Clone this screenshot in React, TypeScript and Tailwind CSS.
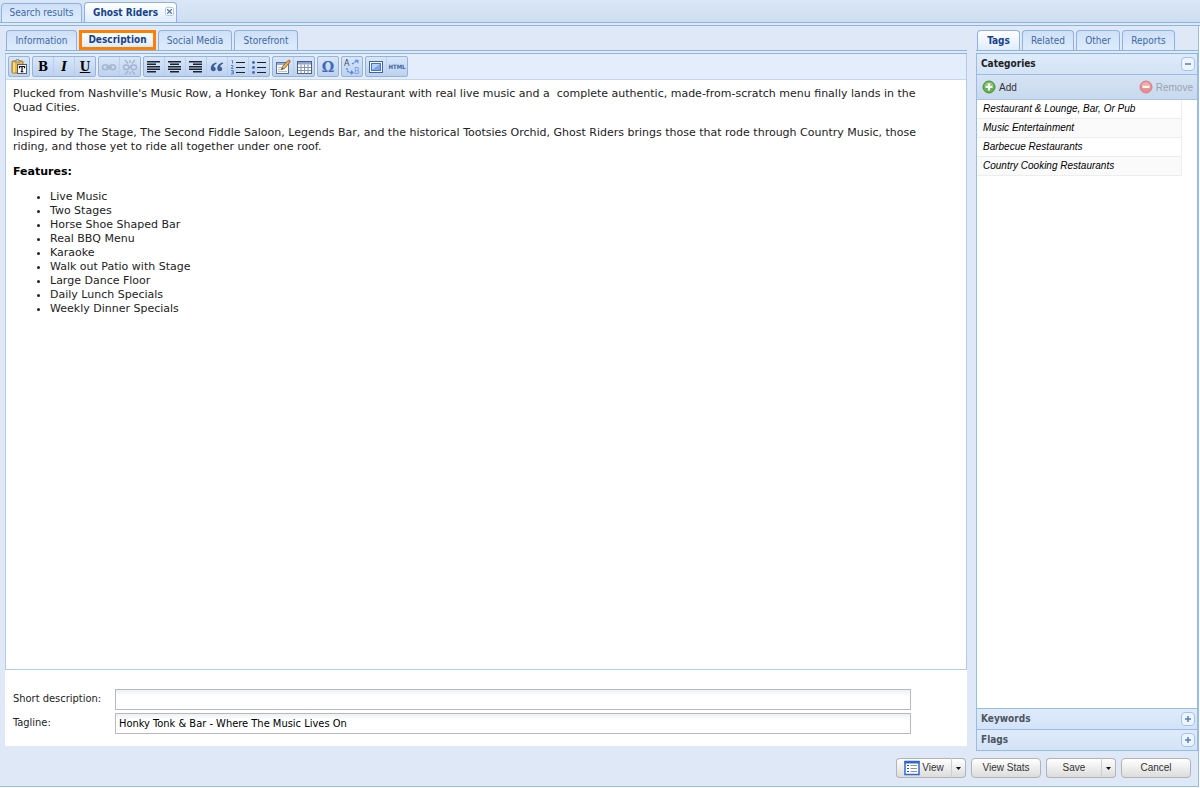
import React from "react"
import clsx from "clsx"

type TabItem = {
  label: string
  width: string
  active?: boolean
  marked?: boolean
}

const editorTabs: TabItem[] = [
  { label: "Information", width: "w-[71px]" },
  { label: "Description", width: "w-[77px]", active: true, marked: true },
  { label: "Social Media", width: "w-[74px]" },
  { label: "Storefront", width: "w-[64px]" },
]

const sideTabs: TabItem[] = [
  { label: "Tags", width: "w-[43px]", active: true },
  { label: "Related", width: "w-[52px]" },
  { label: "Other", width: "w-[44px]" },
  { label: "Reports", width: "w-[53px]" },
]

const features = [
  "Live Music",
  "Two Stages",
  "Horse Shoe Shaped Bar",
  "Real BBQ Menu",
  "Karaoke",
  "Walk out Patio with Stage",
  "Large Dance Floor",
  "Daily Lunch Specials",
  "Weekly Dinner Specials",
]

const categories = [
  "Restaurant & Lounge, Bar, Or Pub",
  "Music Entertainment",
  "Barbecue Restaurants",
  "Country Cooking Restaurants",
]

const Icon: React.FC<{ children: React.ReactNode }> = ({ children }) => (
  <svg width="16" height="16" viewBox="0 0 16 16" fill="none" aria-hidden="true">
    {children}
  </svg>
)

const PasteIcon = () => (
  <Icon>
    <rect x="1" y="2" width="11" height="12" rx="1" fill="#e9b63f" stroke="#a87722" />
    <path d="M2 3.500h2v10H2z" fill="#f8dc8a" />
    <path d="M4 3V1.500h1.500V.5h2v1H9V3z" fill="#d8d8d8" stroke="#777" strokeWidth=".7" />
    <rect x="6.500" y="5.500" width="9" height="9" fill="#f4f6fa" stroke="#555c6c" />
    <path d="M8.500 9.200V7.500h5v1.700M11 7.500v5M9.800 12.700h2.400" stroke="#111" strokeWidth="1.200" />
  </Icon>
)

const LinkIcon = () => (
  <Icon>
    <g stroke="#a5b4cc" strokeWidth="1.500">
      <rect x="1.500" y="6" width="6" height="4.500" rx="2.200" />
      <rect x="8.500" y="6" width="6" height="4.500" rx="2.200" />
      <path d="M5 8.200h6" />
    </g>
  </Icon>
)

const UnlinkIcon = () => (
  <Icon>
    <g stroke="#a5b4cc" strokeWidth="1.300">
      <rect x="1.500" y="6" width="5.500" height="4.500" rx="2.200" />
      <rect x="9" y="6" width="5.500" height="4.500" rx="2.200" />
      <path d="M3 1l3 3.500M8 1v3M13 1l-3 3.500M3 15.500L6 12M8 15.500v-3M13 15.500L10 12M6 10l4-4" />
    </g>
  </Icon>
)

const AlignIcon: React.FC<{ align: "left" | "center" | "right" }> = ({ align }) => {
  const widths = [13, 9, 13, 13, 9]
  return (
    <Icon>
      {widths.map((w, i) => {
        const x = align === "left" ? 1 : align === "right" ? 14 - w : 1 + (13 - w) / 2
        return <rect key={i} x={x} y={2 + i * 2.5} width={w} height="1.500" fill="#1b2230" />
      })}
    </Icon>
  )
}

const QuoteIcon = () => (
  <Icon>
    <g fill="#3d5f98">
      <path d="M7.500 3.500C4 4 1.800 6.200 1.800 9.500c0 1.800 1 2.800 2.500 2.800 1.400 0 2.400-1 2.400-2.300 0-1.300-.8-2.200-2-2.300.2-1.400 1.200-2.500 2.800-3z" />
      <path d="M14 3.500c-3.500.5-5.700 2.700-5.700 6 0 1.800 1 2.800 2.500 2.800 1.400 0 2.400-1 2.400-2.300 0-1.300-.8-2.200-2-2.300.2-1.400 1.200-2.500 2.800-3z" />
    </g>
  </Icon>
)

const OrderedIcon = () => (
  <Icon>
    <path d="M6 3.500h9M6 8.500h9M6 13.500h9" stroke="#1b2230" />
    <path
      d="M1.500 1.500h1v3M1 6.500h2v1.200L1 9.500h2.500M1 11.500h2.300v3.500H1M1.500 13.200h2"
      stroke="#4a78c4"
      strokeWidth=".9"
    />
  </Icon>
)

const BulletIcon = () => (
  <Icon>
    <path d="M6 3.500h9M6 8.500h9M6 13.500h9" stroke="#1b2230" />
    <circle cx="2.500" cy="3.500" r="1.400" fill="#4068b0" />
    <circle cx="2.500" cy="8.500" r="1.400" fill="#4068b0" />
    <circle cx="2.500" cy="13.500" r="1.400" fill="#4068b0" />
  </Icon>
)

const EditIcon = () => (
  <Icon>
    <rect x="1.500" y="3.500" width="12" height="11" fill="#f7faff" stroke="#5d7396" />
    <path d="M2 4h11v2H2z" fill="#8fb0e0" />
    <path d="M3 8.500h5M3 10.500h4M3 12.500h9" stroke="#b4c4de" />
    <path d="M6.500 10.500l1-3L13 1.500l2 1.500-5.500 6.500z" fill="#f1b548" stroke="#7c5523" strokeWidth=".8" />
    <path d="M13 1.200l1-.8 2 1.600-1 1.200z" fill="#d96c58" />
    <path d="M6.500 10.500l.5-1.500 1 .9z" fill="#222" />
  </Icon>
)

const TableIcon = () => (
  <Icon>
    <rect x="1.500" y="2.500" width="14" height="12" fill="#fff" stroke="#4b5f80" />
    <path d="M2 3h13v2.500H2z" fill="#8ba6d2" />
    <path d="M2 8.500h13M2 11.500h13M5 5.500v9M8.500 5.500v9M12 5.500v9" stroke="#8093b2" />
  </Icon>
)

const ReplaceIcon = () => (
  <Icon>
    <text x="0" y="7" fontSize="8" fontFamily="DejaVu Sans" fill="#3c4a62">A</text>
    <text x="10" y="15" fontSize="8" fontFamily="DejaVu Sans" fill="#6f9be8">B</text>
    <path d="M8 5l4-2.500M3 9v2.500l2 2h3" stroke="#4d7fd6" strokeWidth="1.300" strokeDasharray="2 1" />
    <path d="M10.500.8h4v4zM7 11l3 2.500L7 16z" fill="#5b8ce0" />
  </Icon>
)

const FullScreenIcon = () => (
  <Icon>
    <rect x="1.500" y="2.500" width="13" height="11" fill="#fff" stroke="#44639a" />
    <rect x="3.500" y="4.500" width="9" height="7" fill="#78a5ee" stroke="#4474c8" />
    <path d="M4 11V5h8z" fill="#b5d0fb" />
  </Icon>
)

const ListViewIcon = () => (
  <Icon>
    <rect x="1" y="1.500" width="14" height="13" fill="#fff" stroke="#2f68cc" strokeWidth="1.500" />
    <path d="M.5 1h15v2.500H.5z" fill="#2f68cc" />
    <path d="M3 5.500h2M3 8.500h2M3 11.500h2" stroke="#2458b0" />
    <path d="M6.500 5.500H13M6.500 8.500H13M6.500 11.500H13" stroke="#8a94a4" />
  </Icon>
)

const RoundIcon: React.FC<{ kind: "add" | "remove" }> = ({ kind }) => (
  <Icon>
    <circle
      cx="8"
      cy="8"
      r="6"
      fill={kind === "add" ? "#63b548" : "#ec8a8c"}
      stroke={kind === "add" ? "#4a8d3e" : "#d58189"}
    />
    <path d="M3.500 7a4.600 4.600 0 019 0z" fill="#fff" opacity=".3" />
    <path d={kind === "add" ? "M8 4.500v7M4.500 8h7" : "M4.500 8h7"} stroke="#fff" strokeWidth="2.200" />
  </Icon>
)

const glyph = "font-['DejaVu_Serif',serif] text-xs font-bold leading-4 text-black"

const toolGroups: { name: string; icon: React.ReactNode }[][] = [
  [{ name: "Paste as text", icon: <PasteIcon /> }],
  [
    { name: "Bold", icon: <span className={glyph}>B</span> },
    { name: "Italic", icon: <span className={clsx(glyph, "italic")}>I</span> },
    { name: "Underline", icon: <span className={clsx(glyph, "underline")}>U</span> },
  ],
  [
    { name: "Link", icon: <LinkIcon /> },
    { name: "Unlink", icon: <UnlinkIcon /> },
  ],
  [
    { name: "Align left", icon: <AlignIcon align="left" /> },
    { name: "Align center", icon: <AlignIcon align="center" /> },
    { name: "Align right", icon: <AlignIcon align="right" /> },
    { name: "Block quote", icon: <QuoteIcon /> },
    { name: "Numbered list", icon: <OrderedIcon /> },
    { name: "Bulleted list", icon: <BulletIcon /> },
  ],
  [
    { name: "Edit", icon: <EditIcon /> },
    { name: "Table", icon: <TableIcon /> },
  ],
  [
    {
      name: "Special character",
      icon: (
        <span className="font-['DejaVu_Serif',serif] text-sm font-bold leading-4 text-[#3f68b4]">
          Ω
        </span>
      ),
    },
  ],
  [{ name: "Replace", icon: <ReplaceIcon /> }],
  [
    { name: "Full screen", icon: <FullScreenIcon /> },
    {
      name: "Edit source",
      icon: <span className="text-[6px] font-bold leading-4 text-[#3c62a4]">HTML</span>,
    },
  ],
]

const Tabs: React.FC<{ items: TabItem[] }> = ({ items }) => (
  <div role="tablist" className="flex items-end gap-0.5 px-px">
    {items.map((tab) => (
      <button
        key={tab.label}
        role="tab"
        aria-selected={!!tab.active}
        className={clsx(
          "flex h-5 items-center justify-center whitespace-nowrap text-[10px] leading-4",
          tab.width,
          tab.marked
            ? "border-[3px] border-[#ff7f00]"
            : "rounded-t border border-b-0 border-[#8db2e3]",
          tab.active
            ? "bg-linear-to-b from-white to-[#deecfd] font-bold text-[#15428b]"
            : "bg-linear-to-b from-[#cfe0f7] to-[#deecfd] text-[#416aa3]"
        )}
      >
        {tab.label}
      </button>
    ))}
  </div>
)

const TabRule = () => <div className="h-1 border-y border-[#8db2e3] bg-[#deecfd]" />

const SectionHeader: React.FC<{ title: string; open?: boolean }> = ({ title, open }) => (
  <div
    className={clsx(
      "flex h-[21px] items-center justify-between border-[#99bbe8] bg-linear-to-b from-[#dfebfa] to-[#d3e3f6] pl-1 pr-0.5",
      open ? "border-b" : "border-t"
    )}
  >
    <h2 className={clsx("text-[10px] font-bold leading-4", open ? "text-[#222]" : "text-[#4c5561]")}>
      {title}
    </h2>
    <button
      aria-label={open ? `Collapse ${title}` : `Expand ${title}`}
      className="flex size-3.5 items-center justify-center rounded-sm border border-[#a3c3ee] bg-[#edf4fe]"
    >
      <svg width="8" height="8" viewBox="0 0 8 8" aria-hidden="true">
        <path d={open ? "M1 4h6" : "M1 4h6M4 1v6"} stroke="#5580b8" strokeWidth="1.500" />
      </svg>
    </button>
  </div>
)

const actionButton =
  "flex h-5 items-center justify-center rounded-sm border border-[#b3b3b3] bg-linear-to-b from-white to-[#dcdcdc] font-['Liberation_Sans',sans-serif] text-[10px] leading-4 text-[#333]"

const SplitButton: React.FC<{ children: React.ReactNode; label: string }> = ({
  children,
  label,
}) => (
  <div className="flex w-[70px]">
    <button className={clsx(actionButton, "flex-1 rounded-r-none border-r-0")}>{children}</button>
    <button
      aria-label={`${label} options`}
      className={clsx(actionButton, "w-[15px] rounded-l-none border-l-[#cfcfcf]")}
    >
      <svg width="5" height="3" viewBox="0 0 5 3" aria-hidden="true">
        <path d="M0 0h5L2.500 3z" fill="#111" />
      </svg>
    </button>
  </div>
)

const inputClass =
  "h-[21px] min-w-0 flex-1 border border-[#b5b8c8] bg-linear-to-b from-[#eef1f1] to-white to-30% px-[3px] text-[11px] text-black"

const App: React.FC = () => {
  return (
    <div className="flex min-h-screen flex-col bg-white pb-px font-['DejaVu_Sans_Condensed','DejaVu_Sans',sans-serif] text-[#222]">
      <div className="bg-linear-to-b from-[#dbe7f6] to-[#cbdbf0] pt-[2px]">
        <div role="tablist" className="flex items-end gap-0.5 px-px">
          <button
            role="tab"
            aria-selected="false"
            className="h-[19px] w-[81px] rounded-t border border-b-0 border-[#8db2e3] bg-linear-to-b from-[#cfe0f7] to-[#deecfd] text-[10px] leading-4 text-[#416aa3]"
          >
            Search results
          </button>
          <div className="flex h-5 w-[93px] rounded-t border border-b-0 border-[#8db2e3] bg-linear-to-b from-white to-[#deecfd] pl-2">
            <button
              role="tab"
              aria-selected="true"
              className="whitespace-nowrap text-[10px] font-bold leading-4 text-[#15428b]"
            >
              Ghost Riders
            </button>
            <button
              aria-label="Close tab"
              className="ml-auto mr-0.5 mt-1 flex size-[9px] items-center justify-center rounded-xs border border-[#b4cbe9] bg-white"
            >
              <svg width="5" height="5" viewBox="0 0 5 5" aria-hidden="true">
                <path d="M0 0l5 5M5 0L0 5" stroke="#5478ab" strokeWidth="1.300" />
              </svg>
            </button>
          </div>
        </div>
        <TabRule />
      </div>

      <div className="mr-px flex flex-1 flex-col border-b border-r border-[#99bbe8] bg-[#dfe8f6] pt-1">
        <div className="flex flex-1 gap-[9px] pl-[5px]">
          <main className="flex min-w-0 flex-1 flex-col">
            <Tabs items={editorTabs} />
            <TabRule />
            <section className="flex flex-1 flex-col border border-t-0 border-[#b0cbec] bg-white">
              <div
                role="toolbar"
                aria-label="Formatting"
                className="flex gap-0.5 border-b border-[#c2d6ee] bg-[#e3edfb] px-0.5 py-0.5"
              >
                {toolGroups.map((group) => (
                  <div
                    key={group[0].name}
                    className="flex h-[21px] divide-x divide-[#b9cfec] rounded-xs border border-[#98b3da] bg-linear-to-b from-[#d8e6f8] to-[#bdd2ef]"
                  >
                    {group.map((tool) => (
                      <button
                        key={tool.name}
                        aria-label={tool.name}
                        className="box-content flex w-5 items-center justify-center"
                      >
                        {tool.icon}
                      </button>
                    ))}
                  </div>
                ))}
              </div>
              <article className="py-[7px] pl-[7px] pr-6 font-['DejaVu_Sans',sans-serif] text-[11px] leading-[14px]">
                <p className="mb-[11px]">
                  Plucked from Nashville's Music Row, a Honkey Tonk Bar and Restaurant with real
                  live music and a &nbsp;complete authentic, made-from-scratch menu finally lands in
                  the Quad Cities.
                </p>
                <p className="mb-[11px]">
                  Inspired by The Stage, The Second Fiddle Saloon, Legends Bar, and the historical
                  Tootsies Orchid, Ghost Riders brings those that rode through Country Music, those
                  riding, and those yet to ride all together under one roof.
                </p>
                <p className="mb-[11px] font-bold text-black">Features:</p>
                <ul className="list-disc pl-[37px]">
                  {features.map((feature) => (
                    <li key={feature}>{feature}</li>
                  ))}
                </ul>
              </article>
            </section>
            <form className="flex flex-col gap-[3px] bg-white pb-3 pl-2 pr-14 pt-[19px]">
              <div className="flex items-center">
                <label htmlFor="short" className="w-[102px] text-[11px]">
                  Short description:
                </label>
                <input id="short" type="text" className={inputClass} />
              </div>
              <div className="flex items-center">
                <label htmlFor="tagline" className="w-[102px] text-[11px]">
                  Tagline:
                </label>
                <input
                  id="tagline"
                  type="text"
                  defaultValue="Honky Tonk & Bar - Where The Music Lives On"
                  className={inputClass}
                />
              </div>
            </form>
          </main>

          <aside className="flex w-[222px] flex-col">
            <Tabs items={sideTabs} />
            <TabRule />
            <div className="-mb-[5px] flex flex-1 flex-col border border-t-0 border-[#99bbe8] bg-white">
              <SectionHeader title="Categories" open />
              <div className="flex h-[25px] items-center justify-between border-b border-[#a9c4e8] bg-linear-to-b from-[#d6e3f4] to-[#c8d9ee] px-1 font-['Liberation_Sans',sans-serif] text-[10px]">
                <button className="flex items-center gap-0.5 text-[#333]">
                  <RoundIcon kind="add" />
                  Add
                </button>
                <button disabled className="flex items-center gap-0.5 text-[#9aa3b0]">
                  <RoundIcon kind="remove" />
                  Remove
                </button>
              </div>
              <ul className="mr-[15px] flex-1 font-['Liberation_Sans',sans-serif] text-[10px] italic leading-[18px] text-black">
                {categories.map((category) => (
                  <li
                    key={category}
                    className="border-b border-r border-[#ededed] pl-1.5 even:bg-[#fafafa]"
                  >
                    {category}
                  </li>
                ))}
              </ul>
              <SectionHeader title="Keywords" />
              <SectionHeader title="Flags" />
            </div>
          </aside>
        </div>

        <footer className="flex justify-end gap-[5px] pb-2 pr-[7px] pt-3">
          <SplitButton label="View">
            <ListViewIcon />
            <span className="pl-0.5">View</span>
          </SplitButton>
          <button className={clsx(actionButton, "w-[70px]")}>View Stats</button>
          <SplitButton label="Save">Save</SplitButton>
          <button className={clsx(actionButton, "w-[70px]")}>Cancel</button>
        </footer>
      </div>
    </div>
  )
}

export default App
